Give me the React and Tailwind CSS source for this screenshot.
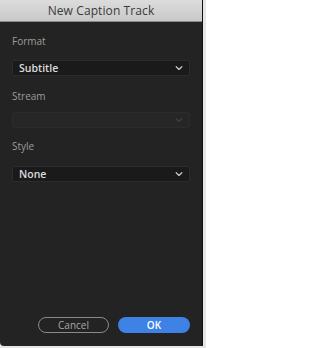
import React from 'react'

function Chevron({ className }) {
  return (
    <svg width="8" height="6" viewBox="0 0 8 6" className={className}>
      <path d="M1.2 1.8 L4 4.4 L6.8 1.8" fill="none" stroke="currentColor" strokeWidth="1.3" strokeLinecap="round" strokeLinejoin="round" />
    </svg>
  )
}

function Select({ value, disabled }) {
  return (
    <div className={`h-[16px] flex items-center justify-between pl-[6px] pr-[6px] rounded-[2px] border border-[#2c2c2c] ${disabled ? 'bg-[#262626]' : 'bg-[#1a1a1a]'}`}>
      <span className="text-[10.5px] font-semibold text-[#dcdcdc] leading-none">{value}</span>
      <Chevron className={disabled ? 'text-[#3e3e3e]' : 'text-[#c8c8c8]'} />
    </div>
  )
}

export default function App() {
  const font = { fontFamily: '"Open Sans", "Liberation Sans", sans-serif' }
  return (
    <div className="w-[206px] h-[348px] bg-[#e6e6e6] flex" style={font}>
      <div className="w-[203px] h-[346px] bg-[#232323] flex flex-col rounded-bl-[4px] border-r border-[#111]">
        {/* title bar */}
        <div className="h-[22px] flex items-center justify-center bg-gradient-to-b from-[#dcdcdc] to-[#c9c9c9] border-b border-[#8a8a8a]">
          <span className="text-[12px] text-[#3a3a3a] tracking-[0.1px]">New Caption Track</span>
        </div>

        <div className="flex flex-col px-[12px] pt-[14px]">
          <div className="text-[10px] text-[#9c9c9c] leading-none h-[11px]">Format</div>
          <div className="mt-[13px]"><Select value="Subtitle" /></div>

          <div className="mt-[15px] text-[10px] text-[#9c9c9c] leading-none h-[11px]">Stream</div>
          <div className="mt-[10px]"><Select value="" disabled /></div>

          <div className="mt-[13px] text-[10px] text-[#9c9c9c] leading-none h-[11px]">Style</div>
          <div className="mt-[14px]"><Select value="None" /></div>
        </div>

        <div className="mt-auto flex justify-end gap-[9px] pr-[12px] pb-[13px]">
          <button className="w-[71px] h-[16px] rounded-full border border-[#8a8a8a] text-[10px] text-[#a8a8a8] leading-none">Cancel</button>
          <button className="w-[72px] h-[16px] rounded-full bg-[#3d82e4] text-[10px] font-semibold text-white leading-none">OK</button>
        </div>
      </div>
    </div>
  )
}
